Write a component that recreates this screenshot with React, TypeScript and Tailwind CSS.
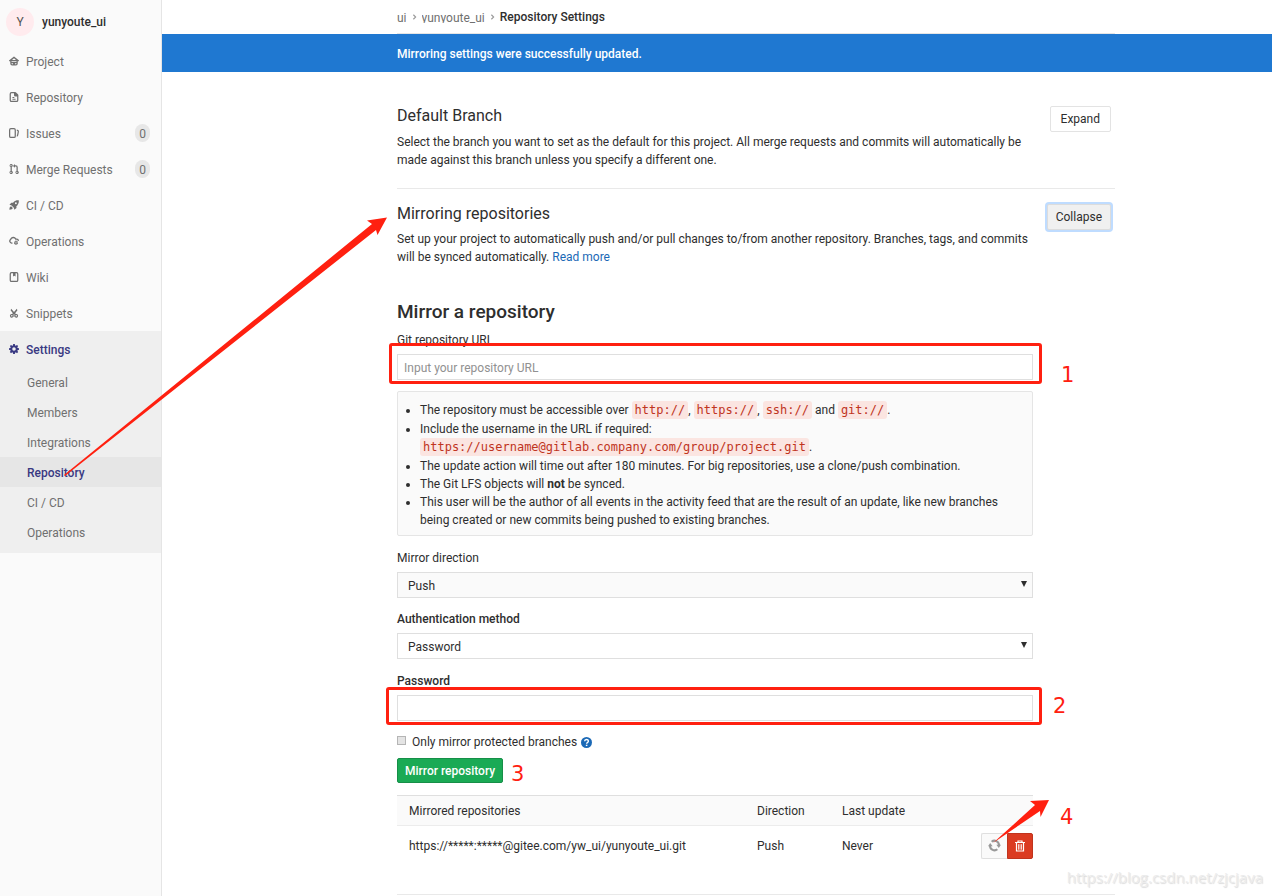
import React from 'react';

type IconProps = { children: React.ReactNode };

function Icon({ children }: IconProps) {
  return (
    <svg viewBox="0 0 16 16" className="h-[10px] w-[10px] shrink-0" fill="currentColor" fillRule="evenodd" aria-hidden="true">
      {children}
    </svg>
  );
}

const icons = {
  project: (
    <path d="M8.600 1a1 1 0 0 0-1.200 0L.4 6.700A1 1 0 0 0 1 8.500h1V12a3 3 0 0 0 3 3h6a3 3 0 0 0 3-3V8.500h1a1 1 0 0 0 .6-1.800L8.600 1zM8 3.500 11.200 6.200H4.800L8 3.500zM4 8.500h8V9.500H4v-1zm0 3h2.500V13H5a1 1 0 0 1-1-1v-.5zm5.500 0H12v.5a1 1 0 0 1-1 1H9.500v-1.500z" />
  ),
  repository: (
    <path d="M4 0h5.600a2 2 0 0 1 1.300.500l3.400 3A2 2 0 0 1 15 5v8a3 3 0 0 1-3 3H4a3 3 0 0 1-3-3V3a3 3 0 0 1 3-3zm0 2a1 1 0 0 0-1 1v10a1 1 0 0 0 1 1h8a1 1 0 0 0 1-1V7h-3a2 2 0 0 1-2-2V2H4zm1.500 6h3v1.500h-3V8zm0 2.700h5v1.600h-5v-1.600z" />
  ),
  issues: (
    <path d="M3 0h5a3 3 0 0 1 3 3v10a3 3 0 0 1-3 3H3a3 3 0 0 1-3-3V3a3 3 0 0 1 3-3zm0 2a1 1 0 0 0-1 1v10a1 1 0 0 0 1 1h5a1 1 0 0 0 1-1V3a1 1 0 0 0-1-1H3zm9.500.5 1.200.4A3 3 0 0 1 15.800 6.400l-1 5a3 3 0 0 1-2.300 2.400v-2.300l.4-.6 1-5a1 1 0 0 0-.7-1.200l-.7-.2v-2z" />
  ),
  merge: (
    <path d="M3.500 0a2.500 2.500 0 0 1 1 4.800v6.400a2.500 2.500 0 1 1-2 0V4.800A2.500 2.500 0 0 1 3.500 0zm0 1.700a.9.9 0 1 0 0 1.700.9.900 0 0 0 0-1.700zm0 11a.9.9 0 1 0 0 1.700.9.900 0 0 0 0-1.700zM9.500 0v2H11a3 3 0 0 1 3 3v6.200a2.500 2.500 0 1 1-2 0V5a1 1 0 0 0-1-1H9.500v2L6.300 3l3.200-3zM13 12.700a.9.9 0 1 0 0 1.700.9.900 0 0 0 0-1.700z" />
  ),
  cicd: (
    <path d="M15.600.4c.5 3.600-.5 6.400-2.600 8.600l-1.200 1 .2 2.700-3.400 2.900-.9-3.300-3.500-3.500L.700 7.600l3-3.300 2.800.1 1-1.200C9.700.9 12.400-.1 15.600.4zM11 3.600a1.500 1.500 0 1 0 0 3 1.500 1.500 0 0 0 0-3zM3.300 10l2.800 2.800c-.6 1.900-2.600 2.800-5.400 2.700C.6 12.700 1.400 10.600 3.300 10z" />
  ),
  operations: (
    <>
      <path d="M4 12.300A4.200 4.200 0 0 1 1.700 4.900 5.500 5.500 0 0 1 11.600 4 4 4 0 0 1 16 8h-2a2 2 0 0 0-2.400-2l-1.200.2-.5-1A3.500 3.500 0 0 0 3.500 5.900l-.2.500-.5.300A2.200 2.200 0 0 0 4.200 10.300h1.300v2H4z" />
      <path d="M10.400 7.300h1.500l.3 1.300 1.300-.4.900 1.400-1 .9 1 1.300-.8 1.300-1.400-.3-.3 1.400h-1.500l-.3-1.300-1.300.4-.8-1.400.9-1-.9-1 .8-1.300 1.300.2.300-1.500zm.8 2.500a1.100 1.100 0 1 0 0 2.200 1.100 1.100 0 0 0 0-2.200z" />
    </>
  ),
  wiki: (
    <path d="M4 0h8a3 3 0 0 1 3 3v10a3 3 0 0 1-3 3H4a3 3 0 0 1-3-3V3a3 3 0 0 1 3-3zm0 2a1 1 0 0 0-1 1v10a1 1 0 0 0 1 1h8a1 1 0 0 0 1-1V3a1 1 0 0 0-1-1h-1.500v5L8.500 6 6.500 7V2H4z" />
  ),
  snippets: (
    <path d="M3.500 1 8 6.500 12.500 1l1 2.500L9.800 8.300l1.200 1.200a3 3 0 1 1-2 1.300L8 9.800l-1 1a3 3 0 1 1-2-1.300l1.200-1.200L2.500 3.500l1-2.500zm1 10.300a1.200 1.200 0 1 0 0 2.400 1.200 1.200 0 0 0 0-2.400zm7 0a1.200 1.200 0 1 0 0 2.400 1.200 1.200 0 0 0 0-2.400z" />
  ),
  settings: (
    <path d="M6.700 0h2.600l.5 2.200 1.100.5L12.800 1.400l1.800 1.800-1.300 1.900.5 1.100 2.200.5v2.600l-2.200.5-.5 1.100 1.300 1.900-1.800 1.800-1.900-1.300-1.100.5L9.300 16H6.700l-.5-2.200-1.100-.5-1.900 1.300-1.800-1.800 1.300-1.900-.5-1.100L0 9.300V6.700l2.200-.5.5-1.100L1.400 3.200l1.800-1.800 1.900 1.300 1.100-.5L6.700 0zM8 5.200a2.800 2.800 0 1 0 0 5.600 2.800 2.800 0 0 0 0-5.600z" />
  ),
};

const navItems: { label: string; icon: React.ReactNode; count?: number }[] = [
  { label: 'Project', icon: icons.project },
  { label: 'Repository', icon: icons.repository },
  { label: 'Issues', icon: icons.issues, count: 0 },
  { label: 'Merge Requests', icon: icons.merge, count: 0 },
  { label: 'CI / CD', icon: icons.cicd },
  { label: 'Operations', icon: icons.operations },
  { label: 'Wiki', icon: icons.wiki },
  { label: 'Snippets', icon: icons.snippets },
];

const settingsItems = ['General', 'Members', 'Integrations', 'Repository', 'CI / CD', 'Operations'];

function Sidebar() {
  return (
    <aside className="w-[162px] shrink-0 border-r border-[#e5e5e5] bg-[#fafafa] text-[#707070]">
      <a href="#" className="flex h-[43px] items-center gap-2 pl-1.5 text-[#2e2e2e]">
        <span className="flex h-7 w-7 items-center justify-center rounded-full bg-[#ffebee] text-[#555]">Y</span>
        <span className="font-medium">yunyoute_ui</span>
      </a>
      <nav>
        {navItems.map((item) => (
          <a key={item.label} href="#" className="flex h-9 items-center gap-[7px] pr-[11px] pl-[9px]">
            <Icon>{item.icon}</Icon>
            <span className="grow pt-0.5">{item.label}</span>
            {item.count !== undefined && (
              <span className="h-[18px] rounded-full bg-[#e7e7e7] px-1 leading-5">{item.count}</span>
            )}
          </a>
        ))}
        <div className="bg-[#efefef] pb-1.5">
          <a href="#" className="flex h-9 items-center gap-[7px] pl-[9px] font-medium text-[#393982]">
            <Icon>{icons.settings}</Icon>
            <span className="pt-0.5">Settings</span>
          </a>
          {settingsItems.map((label) =>
            label === 'Repository' ? (
              <a key={label} href="#" className="flex h-[30px] items-center bg-[#e6e6e6] pt-0.5 pl-[27px] font-medium text-[#393982]">
                {label}
              </a>
            ) : (
              <a key={label} href="#" className="flex h-[30px] items-center pt-0.5 pl-[27px]">
                {label}
              </a>
            ),
          )}
        </div>
      </nav>
    </aside>
  );
}

function Chevron() {
  return (
    <svg viewBox="0 0 6 8" className="h-[6px] w-[5px]" fill="none" stroke="#999" strokeWidth="1.5" aria-hidden="true">
      <path d="M1.500 1l3 3-3 3" />
    </svg>
  );
}

function Code({ children }: { children: React.ReactNode }) {
  return (
    <code className="rounded-[3px] bg-[#fbe5e1] px-[3px] py-0.5 font-['DejaVu_Sans_Mono',monospace] text-[12px] text-[#c0341d]">
      {children}
    </code>
  );
}

function SelectField({ id, value, muted }: { id: string; value: string; muted?: boolean }) {
  return (
    <div className="relative">
      <select
        id={id}
        className={
          muted
            ? 'block h-[26px] w-full appearance-none border border-[#dfdfdf] bg-[#fafafa] pt-0.5 pl-2.5 text-[12px] text-[#2e2e2e]'
            : 'block h-[26px] w-full appearance-none border border-[#dfdfdf] bg-white pt-0.5 pl-2.5 text-[12px] text-[#2e2e2e]'
        }
      >
        <option>{value}</option>
      </select>
      <svg viewBox="0 0 6 6" className="pointer-events-none absolute top-[9px] right-[6px] h-[6px] w-[6px]" fill="#2e2e2e" aria-hidden="true">
        <path d="M0 0h6L3 6z" />
      </svg>
    </div>
  );
}

function Callout({ n, place }: { n: number; place: string }) {
  return (
    <span className={`absolute font-['DejaVu_Sans',sans-serif] text-[21px] leading-6 text-[#ff2010] ${place}`}>{n}</span>
  );
}

export default function App() {
  return (
    <div className="relative flex min-h-screen overflow-hidden bg-white font-['Roboto',sans-serif] text-[12px] leading-[18px] text-[#2e2e2e]">
      <Sidebar />
      <div className="min-w-0 grow">
        <header className="pl-[235px]">
          <div className="flex h-[34px] max-w-[718px] items-center gap-[5px] border-b border-[#e5e5e5]">
            <a href="#" className="h-3 overflow-hidden leading-[14px] text-[#707070]">ui</a>
            <Chevron />
            <a href="#" className="h-3 overflow-hidden leading-[14px] text-[#707070]">yunyoute_ui</a>
            <Chevron />
            <span className="font-medium">Repository Settings</span>
          </div>
        </header>
        <div className="flex h-[38px] items-center bg-[#1f78d1] pt-0.5 pl-[235px] font-medium text-white">
          Mirroring settings were successfully updated.
        </div>

        <main className="pl-[235px]">
          <div className="max-w-[718px]">
            <section className="flex items-start justify-between border-b border-[#e9e9e9] pt-[34px] pr-1 pb-[19px]">
              <div className="w-[636px]">
                <h4 className="mb-[7px] text-[16px] leading-5">Default Branch</h4>
                <p>
                  Select the branch you want to set as the default for this project. All merge requests and commits will automatically be made against this branch unless you specify a different one.
                </p>
              </div>
              <button className="h-[26px] rounded-[2px] border border-[#e3e3e3] bg-white px-2.5">Expand</button>
            </section>

            <section className="border-b border-[#e9e9e9] pb-7">
              <div className="flex items-start justify-between pt-[15px] pr-1">
                <div className="w-[636px]">
                  <h4 className="mb-1.5 text-[16px] leading-5">Mirroring repositories</h4>
                  <p>
                    Set up your project to automatically push and/or pull changes to/from another repository. Branches, tags, and commits will be synced automatically.{' '}
                    <a href="#" className="text-[#1b69b6]">Read more</a>
                  </p>
                </div>
                <button className="h-[26px] rounded-[2px] border border-[#dcdcdc] bg-[#f0f0f0] px-2 ring-2 ring-[#bfdcff]">Collapse</button>
              </div>

              <form className="w-[636px] pt-[34px]" onSubmit={(e) => e.preventDefault()}>
                <h3 className="mb-[7px] text-[19px] leading-6 font-medium">Mirror a repository</h3>
                <label htmlFor="url" className="mb-[5px] block">Git repository URL</label>
                <input
                  id="url"
                  type="text"
                  placeholder="Input your repository URL"
                  className="block h-[26px] w-full border border-[#dfdfdf] bg-white px-1.5 pt-0.5 placeholder:text-[#919191]"
                />
                <div className="mt-[11px] rounded-[2px] border border-[#e5e5e5] bg-[#fafafa] pt-[9px] pr-3 pb-1.5 pl-[22px]">
                  <ul className="list-disc">
                    <li className="leading-[19px]">
                      The repository must be accessible over <Code>http://</Code>, <Code>https://</Code>, <Code>ssh://</Code> and <Code>git://</Code>.
                    </li>
                    <li className="mb-px">
                      Include the username in the URL if required: <Code>https://username@gitlab.company.com/group/project.git</Code>.
                    </li>
                    <li>The update action will time out after 180 minutes. For big repositories, use a clone/push combination.</li>
                    <li>The Git LFS objects will <strong>not</strong> be synced.</li>
                    <li>
                      This user will be the author of all events in the activity feed that are the result of an update, like new branches being created or new commits being pushed to existing branches.
                    </li>
                  </ul>
                </div>

                <label htmlFor="direction" className="mt-[13px] mb-[5px] block">Mirror direction</label>
                <SelectField id="direction" value="Push" muted />
                <label htmlFor="auth" className="mt-3 mb-[5px] block font-medium">Authentication method</label>
                <SelectField id="auth" value="Password" />
                <label htmlFor="password" className="mt-[13px] mb-[5px] block font-medium">Password</label>
                <input id="password" type="password" className="block h-[26px] w-full border border-[#dfdfdf] bg-white px-1.5" />

                <div className="mt-3 flex items-center">
                  <input
                    id="protected"
                    type="checkbox"
                    className="mr-1.5 mb-[3px] h-[9px] w-[9px] appearance-none border border-[#b5b5b5] bg-[#e4e4e4]"
                  />
                  <label htmlFor="protected">Only mirror protected branches</label>
                  <a href="#" aria-label="Help" className="ml-1">
                    <svg viewBox="0 0 16 16" className="h-[11px] w-[11px]" aria-hidden="true">
                      <circle cx="8" cy="8" r="8" fill="#1b69b6" />
                      <path d="M5.300 6.200C5.300 2.800 10.700 2.800 10.700 6c0 2-2.500 1.900-2.500 3.800" fill="none" stroke="#fff" strokeWidth="2" />
                      <path d="M7 11.200h2.300v2H7z" fill="#fff" />
                    </svg>
                  </a>
                </div>
                <button className="mt-[7px] block h-[25px] rounded-[2px] border border-[#168f48] bg-[#1aaa55] px-[7px] font-medium text-white">
                  Mirror repository
                </button>
              </form>

              <table className="mt-3 w-[636px] table-fixed border-collapse text-left">
                <thead className="border-y border-t-[#dfdfdf] border-b-[#ececec] bg-[#fafafa]">
                  <tr className="h-[30px]">
                    <th className="w-[348px] pl-3 font-normal">Mirrored repositories</th>
                    <th className="w-[85px] pl-3 font-normal">Direction</th>
                    <th className="pl-3 font-normal">Last update</th>
                    <th className="w-[60px]" aria-label="Actions" />
                  </tr>
                </thead>
                <tbody>
                  <tr className="h-[40px]">
                    <td className="pl-3">https://*****:*****@gitee.com/yw_ui/yunyoute_ui.git</td>
                    <td className="pl-3">Push</td>
                    <td className="pl-3">Never</td>
                    <td>
                      <div className="flex justify-end">
                        <button aria-label="Update now" className="flex h-[26px] w-[26px] items-center justify-center rounded-l-[2px] border border-r-0 border-[#dfdfdf] bg-[#fafafa]">
                          <svg viewBox="0 0 16 16" className="h-[13px] w-[13px]" fill="none" stroke="#999" strokeWidth="2.600" aria-hidden="true">
                            <path d="M4.500 3.400A5.500 5.500 0 0 1 13.500 7.500M11.500 12.600A5.500 5.500 0 0 1 2.500 8.500" />
                            <path d="M10.300 7h5.700l-2.700 4zM0 9h5.700L2.700 5z" fill="#999" stroke="none" />
                          </svg>
                        </button>
                        <button aria-label="Remove" className="flex h-[26px] w-[26px] items-center justify-center rounded-r-[2px] border border-[#c0341d] bg-[#db3b21]">
                          <svg viewBox="0 0 12 12" className="h-[12px] w-[12px]" fill="none" stroke="#fff" aria-hidden="true">
                            <path d="M1 2.500h10M4 2.500V1h4v1.500M2.500 3v8h7V3" strokeWidth="1.200" />
                            <path d="M4.500 4.200v5.500M6 4.200v5.500M7.500 4.200v5.500" strokeWidth=".8" />
                          </svg>
                        </button>
                      </div>
                    </td>
                  </tr>
                </tbody>
              </table>
            </section>
          </div>
        </main>
      </div>

      <div className="pointer-events-none absolute top-[343px] left-[389px] h-[41px] w-[653px] rounded-[3px] border-3 border-[#ff2010]" />
      <div className="pointer-events-none absolute top-[687px] left-[386px] h-[38px] w-[656px] rounded-[3px] border-3 border-[#ff2010]" />
      <svg className="pointer-events-none absolute top-0 left-0 h-[896px] w-[1272px]" viewBox="0 0 1272 896" fill="#ff2010" aria-hidden="true">
        <path d="M64 475 372 224l-5-3.500 20-3-9.500 17.500-1.500-5L65 476z" />
        <path d="M993 843 1035 805l-5-4 19-1-8.500 17-.5-6z" />
      </svg>
      <Callout n={1} place="top-[363px] left-[1061px]" />
      <Callout n={2} place="top-[694px] left-[1053px]" />
      <Callout n={3} place="top-[762px] left-[511px]" />
      <Callout n={4} place="top-[805px] left-[1060px]" />
      <span className="absolute right-[9px] bottom-[7px] font-['Open_Sans',sans-serif] text-[15px] leading-6 text-[#ececec] [text-shadow:1px_1px_1px_#dcdcdc]">
        https://blog.csdn.net/zjcjava
      </span>
    </div>
  );
}
